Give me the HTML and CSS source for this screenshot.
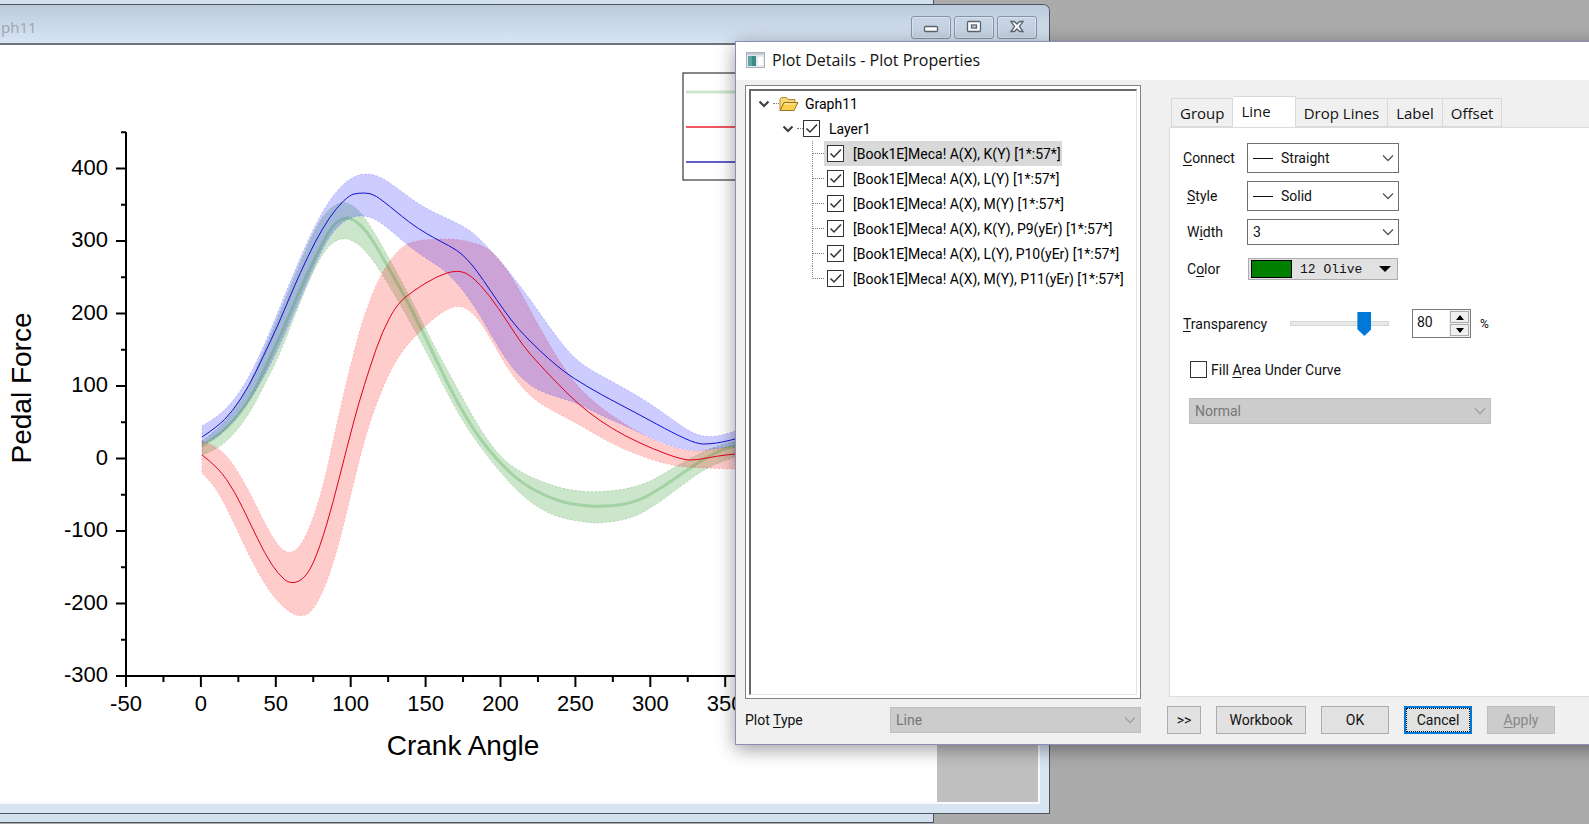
FILE: index.html
```html
<!DOCTYPE html>
<html lang="en">
<head>
    <meta charset="UTF-8">
    <meta name="viewport" content="width=device-width, initial-scale=1.0">
    <title>Plot Details</title>
    <link rel="stylesheet" href="styles.css">
</head>
<body>
    <svg class="symbols" aria-hidden="true">
        <symbol id="chevron" viewBox="0 0 12 8"><path d="M1 1.5 6 6.5 11 1.5" fill="none" stroke="currentColor" stroke-width="1.3"/></symbol>
        <symbol id="toggle" viewBox="0 0 12 8"><path d="M1.5 1.5 6 6 10.5 1.5" fill="none" stroke="currentColor" stroke-width="2.2"/></symbol>
    </svg>

    <div class="back-window"></div>

    <section class="graph-window">
        <header class="graph-title">
            <span>ph11</span>
            <div class="window-buttons">
                <button type="button" aria-label="Minimize"><svg width="16" height="14" viewBox="0 0 16 14"><rect x="1.5" y="6.5" width="13" height="5" rx="1" fill="#fff" stroke="#5c6370" stroke-width="1.3"/></svg></button>
                <button type="button" aria-label="Restore"><svg width="16" height="14" viewBox="0 0 16 14"><rect x="1.5" y="1.5" width="13" height="10" rx="1" fill="#fff" stroke="#5c6370" stroke-width="1.3"/><rect x="5.5" y="5" width="5" height="3" fill="#c8d4e2" stroke="#5c6370" stroke-width="1.3"/></svg></button>
                <button type="button" aria-label="Close"><svg width="16" height="14" viewBox="0 0 16 14"><path d="M2 1.5h3.4L8 4l2.6-2.5H14L10.4 6.5l3.6 5h-3.4L8 9l-2.6 2.5H2l3.6-5z" fill="#fff" stroke="#5c6370" stroke-width="1.3"/></svg></button>
            </div>
        </header>
        <div class="graph-client">
            <div class="graph-page">
                <svg id="chart" width="937" height="757" viewBox="0 45 937 757" role="img" aria-label="Pedal force against crank angle"></svg>
            </div>
        </div>
    </section>

    <section class="dialog" role="dialog" aria-labelledby="dialog-title">
        <header class="dialog-title">
            <svg width="20" height="18" viewBox="0 0 20 18"><rect x=".5" y="1.5" width="18" height="15" fill="#e4eaf0" stroke="#a9b1ba"/><rect x="1" y="2" width="17" height="2" fill="#c3ccd6"/><rect x="2" y="5" width="8" height="10" fill="#3f8a88"/><path d="M2 5h4v10H2z" fill="#5ba59c"/><rect x="12" y="6" width="5" height="8" fill="#fff"/></svg>
            <h1 id="dialog-title">Plot Details - Plot Properties</h1>
        </header>

        <div class="dialog-body">
            <div class="tree-frame">
                <ul class="tree">
                    <li class="node node-root">
                        <svg class="toggle"><use href="#toggle"/></svg>
                        <span class="dots"></span>
                        <svg width="20" height="16" viewBox="0 0 20 16"><path d="M1 14.5V3l1.5-1.5h5L9 3.5h7V6" fill="#f6d777" stroke="#b58a2c"/><path d="M1 14.5 5 6.5h14l-4 8z" fill="#f9cf4e" stroke="#9b7420"/><path d="M5.5 8h11" stroke="#fff0b5"/></svg>
                        <span class="node-text">Graph11</span>
                    </li>
                    <li class="node node-layer">
                        <svg class="toggle"><use href="#toggle"/></svg>
                        <span class="dots"></span>
                        <input type="checkbox" id="layer1" checked>
                        <label class="node-text" for="layer1">Layer1</label>
                    </li>
                    <li>
                        <ul class="plots">
                            <li class="node selected"><span class="dots"></span><span class="plot"><input type="checkbox" id="p1" checked><label class="node-text" for="p1">[Book1E]Meca! A(X), K(Y) [1*:57*]</label></span></li>
                            <li class="node"><span class="dots"></span><span class="plot"><input type="checkbox" id="p2" checked><label class="node-text" for="p2">[Book1E]Meca! A(X), L(Y) [1*:57*]</label></span></li>
                            <li class="node"><span class="dots"></span><span class="plot"><input type="checkbox" id="p3" checked><label class="node-text" for="p3">[Book1E]Meca! A(X), M(Y) [1*:57*]</label></span></li>
                            <li class="node"><span class="dots"></span><span class="plot"><input type="checkbox" id="p4" checked><label class="node-text" for="p4">[Book1E]Meca! A(X), K(Y), P9(yEr) [1*:57*]</label></span></li>
                            <li class="node"><span class="dots"></span><span class="plot"><input type="checkbox" id="p5" checked><label class="node-text" for="p5">[Book1E]Meca! A(X), L(Y), P10(yEr) [1*:57*]</label></span></li>
                            <li class="node"><span class="dots"></span><span class="plot"><input type="checkbox" id="p6" checked><label class="node-text" for="p6">[Book1E]Meca! A(X), M(Y), P11(yEr) [1*:57*]</label></span></li>
                        </ul>
                    </li>
                </ul>
            </div>

            <div class="tabs">
                <nav class="tab-bar">
                    <button type="button">Group</button>
                    <button type="button" class="active">Line</button>
                    <button type="button">Drop Lines</button>
                    <button type="button">Label</button>
                    <button type="button">Offset</button>
                </nav>
                <form class="tab-page">
                    <div class="fields">
                        <label for="connect"><u>C</u>onnect</label>
                        <div class="combo combo-tall with-line">
                            <select id="connect"><option>Straight</option></select>
                            <span class="line-sample"></span>
                            <svg class="arrow"><use href="#chevron"/></svg>
                        </div>
                        <label for="style" class="inset"><u>S</u>tyle</label>
                        <div class="combo combo-tall with-line">
                            <select id="style"><option>Solid</option></select>
                            <span class="line-sample"></span>
                            <svg class="arrow"><use href="#chevron"/></svg>
                        </div>
                        <label for="width" class="inset">W<u>i</u>dth</label>
                        <div class="combo">
                            <select id="width"><option>3</option></select>
                            <svg class="arrow"><use href="#chevron"/></svg>
                        </div>
                        <label for="color" class="inset">C<u>o</u>lor</label>
                        <div class="combo color-combo">
                            <select id="color"><option>12 Olive</option></select>
                            <span class="swatch"></span>
                            <svg class="arrow" viewBox="0 0 12 8"><path d="M0 1h12L6 7z"/></svg>
                        </div>
                    </div>

                    <div class="transparency">
                        <label for="transparency"><u>T</u>ransparency</label>
                        <input type="range" id="transparency" min="0" max="100" value="80">
                        <div class="spinner">
                            <input type="text" id="percent" value="80" aria-label="Transparency percent">
                            <div class="spin-buttons">
                                <button type="button" aria-label="Up"><svg width="8" height="5" viewBox="0 0 8 5"><path d="M0 5h8L4 0z"/></svg></button>
                                <button type="button" aria-label="Down"><svg width="8" height="5" viewBox="0 0 8 5"><path d="M0 0h8L4 5z"/></svg></button>
                            </div>
                        </div>
                        <span class="unit">%</span>
                    </div>

                    <div class="fill-area">
                        <input type="checkbox" id="fill">
                        <label for="fill">Fill <u>A</u>rea Under Curve</label>
                    </div>

                    <div class="combo combo-disabled fill-mode">
                        <select aria-label="Fill mode" disabled><option>Normal</option></select>
                        <svg class="arrow"><use href="#chevron"/></svg>
                    </div>
                </form>
            </div>

            <div class="plot-type">
                <label for="plot-type">Plot <u>T</u>ype</label>
                <div class="combo combo-disabled">
                    <select id="plot-type" disabled><option>Line</option></select>
                    <svg class="arrow"><use href="#chevron"/></svg>
                </div>
            </div>

            <div class="actions">
                <button type="button" class="more">&gt;&gt;</button>
                <button type="button" class="wide">Workbook</button>
                <button type="button">OK</button>
                <button type="button" class="focused">Cancel</button>
                <button type="button" disabled><u>A</u>pply</button>
            </div>
        </div>
    </section>

    <script src="chart.js"></script>
</body>
</html>
```
FILE: styles.css
```css
* {
    box-sizing: border-box;
}
body {
    margin: 0;
    height: 100vh;
    overflow: hidden;
    background-color: #ababab;
    color: #111;
    font-family: Roboto, "Liberation Sans", sans-serif;
    font-size: 14px;
}
ul {
    list-style: none;
    margin: 0;
    padding: 0;
}
button,
input,
select {
    margin: 0;
    font: inherit;
    color: inherit;
}
u {
    text-underline-offset: 2px;
}
.symbols {
    position: absolute;
    width: 0;
    height: 0;
}

/* graph windows */
.back-window {
    position: absolute;
    top: -10px;
    bottom: 1px;
    left: 0;
    width: 934px;
    background-color: #d3e0ed;
    border: 1px solid #4d545e;
    border-left: 0;
}
.graph-window {
    position: absolute;
    top: 4px;
    bottom: 10px;
    left: 0;
    width: 1050px;
    display: flex;
    flex-direction: column;
    padding-right: 9px;
    padding-bottom: 9px;
    background-color: #d7e4f2;
    border: 1px solid #4d545e;
    border-left: 0;
    border-radius: 0 7px 0 0;
}
.graph-title {
    display: flex;
    align-items: center;
    justify-content: space-between;
    height: 38px;
    margin-right: -9px;
    padding: 6px 12px 0 1px;
    flex: none;
    background: linear-gradient(#bccbdb, #d7e4f3);
    border-radius: 0 6px 0 0;
    color: #9da5ae;
    font-family: "Open Sans", sans-serif;
    font-size: 15px;
}
.window-buttons {
    display: flex;
    gap: 3px;
}
.window-buttons button {
    display: flex;
    align-items: center;
    justify-content: center;
    width: 40px;
    height: 23px;
    padding: 0;
    background-color: #c6d4e4;
    border: 1px solid #8793a5;
    border-radius: 3px;
    box-shadow: inset 0 0 0 1px #d9e4f0;
}
.graph-client {
    flex: 1;
    min-height: 0;
    background-color: #c0c0c0;
    border: 2px solid #f8fafc;
    border-top: 2px solid #6b747c;
    border-left: 0;
    overflow: hidden;
}
.graph-page {
    width: 937px;
    height: 100%;
    background-color: #fff;
    overflow: hidden;
}
.graph-page svg {
    display: block;
}
.chart-text {
    font-family: "Liberation Sans", Arial, sans-serif;
    font-size: 22px;
    fill: #000;
}
.chart-title {
    font-size: 28px;
}

/* dialog */
.dialog {
    position: absolute;
    top: 41px;
    bottom: 79px;
    left: 735px;
    right: -40px;
    display: flex;
    flex-direction: column;
    background-color: #f0f0f0;
    border: 1px solid #8d8db8;
    box-shadow: 0 4px 18px rgba(0, 0, 0, 0.4);
}
.dialog-title {
    display: flex;
    align-items: center;
    gap: 6px;
    height: 38px;
    flex: none;
    padding: 0 0 2px 10px;
    background-color: #fff;
}
.dialog-title h1 {
    margin: 0;
    font-family: "Open Sans", sans-serif;
    font-size: 16px;
    font-weight: normal;
}
.dialog-body {
    flex: 1;
    display: grid;
    grid-template-columns: 396px 1fr;
    grid-template-rows: 1fr 28px;
    column-gap: 26px;
    row-gap: 7px;
    padding: 5px 0 10px 9px;
}
.tree-frame {
    padding: 3px;
    background-color: #fff;
    border: 1px solid #828282;
}
.tree {
    height: 100%;
    border: 1px solid #e3e3e3;
    border-top: 2px solid #696969;
    border-left: 2px solid #696969;
}
.node {
    display: flex;
    align-items: center;
    height: 25px;
}
.node-root {
    padding-left: 7px;
}
.node-layer {
    padding-left: 31px;
}
.toggle {
    width: 12px;
    height: 8px;
    color: #404040;
}
.dots {
    width: 6px;
    margin-left: 3px;
    border-top: 1px dotted #808080;
}
.node-root .node-text {
    margin-left: 6px;
}
.node-text {
    margin-left: 9px;
    white-space: nowrap;
    color: #000;
}
.node input,
.fill-area input {
    appearance: none;
    flex: none;
    width: 17px;
    height: 17px;
    border: 1px solid #333;
    background-color: #fff;
}
.node input:checked {
    background-image: url("data:image/svg+xml,%3Csvg xmlns='http://www.w3.org/2000/svg' viewBox='0 0 15 15'%3E%3Cpath d='M2.5 7.5 6 11l7-7.5' fill='none' stroke='%23333' stroke-width='1.5'/%3E%3C/svg%3E");
}
.plots {
    margin-left: 61px;
}
.plots .node {
    background: repeating-linear-gradient(#909090 0 1px, transparent 1px 2px) no-repeat 0 0 / 1px 100%;
}
.plots .node:last-child {
    background-size: 1px 50%;
}
.plots .dots {
    width: 11px;
    margin-left: 1px;
}
.plot {
    display: flex;
    align-items: center;
    height: 25px;
    padding: 0 1px 0 3px;
}
.selected .plot {
    background-color: #d9d9d9;
}

/* tabs */
.tabs {
    display: flex;
    flex-direction: column;
    margin: 6px 0 2px 2px;
}
.tab-bar {
    display: flex;
    align-items: flex-end;
    height: 36px;
    padding-left: 2px;
}
.tab-bar button {
    height: 29px;
    padding: 0 8px;
    background-color: #f0f0f0;
    border: 1px solid #d9d9d9;
    border-left-width: 0;
    font-family: "Open Sans", sans-serif;
    font-size: 15px;
}
.tab-bar button:first-child {
    border-left-width: 1px;
}
.tab-bar .active {
    height: 32px;
    margin-bottom: -1px;
    padding: 0 24px 4px 8px;
    background-color: #fff;
    border-bottom: 0;
}
.tab-page {
    flex: 1;
    padding: 15px 14px 0 13px;
    background-color: #fff;
    border: 1px solid #dcdcdc;
}
.fields {
    display: grid;
    grid-template-columns: 64px 152px;
    row-gap: 8px;
    align-items: center;
}
.inset {
    padding-left: 4px;
}
.combo {
    display: grid;
    align-items: center;
}
.combo > * {
    grid-area: 1 / 1;
}
.combo select {
    appearance: none;
    width: 100%;
    height: 26px;
    padding: 0 24px 0 5px;
    background-color: #fff;
    border: 1px solid #6f6f6f;
    border-radius: 0;
    opacity: 1;
}
.combo-tall select {
    height: 30px;
}
.with-line select {
    padding-left: 33px;
}
.line-sample {
    width: 20px;
    height: 1px;
    margin-left: 6px;
    background-color: #111;
}
.arrow {
    justify-self: end;
    width: 12px;
    height: 8px;
    margin-right: 5px;
    color: #555;
    pointer-events: none;
}
.color-combo {
    margin: 5px 1px;
}
.color-combo select {
    height: 22px;
    padding-left: 51px;
    background-color: #e1e1e1;
    border-color: #adadad;
    font-family: "Liberation Mono", monospace;
    font-size: 13px;
}
.color-combo .arrow {
    margin-right: 7px;
}
.swatch {
    width: 41px;
    height: 18px;
    margin-left: 3px;
    background-color: #008000;
    border: 1px solid #000;
}
.transparency {
    display: flex;
    align-items: center;
    margin-top: 24px;
}
.transparency label {
    width: 107px;
}
.transparency input[type="range"] {
    appearance: none;
    width: 99px;
    height: 25px;
    margin-right: 23px;
    background: none;
}
.transparency input::-webkit-slider-runnable-track {
    height: 5px;
    background-color: #e7eaea;
    border: 1px solid #d6d6d6;
}
.transparency input::-webkit-slider-thumb {
    appearance: none;
    width: 14px;
    height: 24px;
    margin-top: -10px;
    background-color: #0078d7;
    clip-path: polygon(0 0, 100% 0, 100% 72%, 50% 100%, 0 72%);
}
.spinner {
    display: flex;
    width: 59px;
    height: 29px;
    border: 1px solid #7a7a7a;
}
.spinner input {
    width: 36px;
    padding: 0 0 4px 4px;
    border: 0;
}
.spin-buttons {
    flex: 1;
    display: grid;
    gap: 1px;
    padding: 1px;
    background-color: #f0f0f0;
}
.spin-buttons button {
    display: flex;
    align-items: center;
    justify-content: center;
    padding: 0;
    background-color: #f0f0f0;
    border: 1px solid #acacac;
}
.unit {
    margin-left: 9px;
    font-size: 12px;
}
.fill-area {
    display: flex;
    align-items: center;
    gap: 4px;
    margin: 23px 0 20px 7px;
}
.fill-mode {
    width: 302px;
    margin-left: 6px;
}
.combo-disabled select {
    background-color: #cccccc;
    border-color: #bfbfbf;
    color: #777;
}
.combo-disabled .arrow {
    color: #a0a0a0;
}

/* bottom row */
.plot-type {
    display: grid;
    grid-template-columns: 145px 1fr;
    align-items: center;
}
.actions {
    display: flex;
    gap: 15px;
}
.actions button {
    width: 68px;
    padding: 0;
    background-color: #e1e1e1;
    border: 1px solid #adadad;
}
.actions .more {
    width: 34px;
}
.actions .wide {
    width: 90px;
}
.actions .focused {
    border: 2px solid #0078d7;
    outline: 1px dotted #111;
    outline-offset: -3px;
}
.actions button:disabled {
    background-color: #cccccc;
    border-color: #bfbfbf;
    color: #888;
}
```
FILE: chart.js
```js
const svg = document.getElementById('chart');

const series = [
    {
        color: '#008000',
        lineColor: 'rgba(0, 128, 0, 0.2)',
        width: 3,
        upper: [202,441, 220,428, 243,398, 260,360, 277,320, 293,280, 310,240, 323,215, 337,203, 347,202, 360,211, 373,230, 390,260, 410,297, 430,338, 457,388, 480,429, 500,457, 520,472, 547,484, 573,491, 600,492, 627,489, 650,482, 673,468, 693,457, 713,447, 735,441],
        line: [202,446, 223,433, 247,405, 263,373, 283,330, 303,283, 320,248, 332,226, 343,218, 352,218, 367,231, 383,258, 403,293, 422,330, 440,368, 457,402, 477,435, 497,460, 520,482, 547,497, 573,505, 607,507, 637,502, 663,487, 687,470, 707,457, 723,449, 735,446],
        lower: [202,455, 210,452, 227,442, 247,418, 263,388, 280,354, 293,320, 313,271, 327,247, 340,238, 353,240, 367,252, 383,275, 407,316, 427,353, 443,385, 460,417, 480,447, 500,472, 520,494, 540,509, 560,518, 590,523, 603,523, 630,519, 653,507, 680,487, 700,472, 720,462, 735,457]
    },
    {
        color: '#ff0000',
        lineColor: '#e0001a',
        width: 1,
        upper: [202,441, 217,446, 233,463, 250,493, 263,520, 277,545, 288,554, 300,548, 313,520, 325,479, 337,423, 350,367, 363,318, 380,275, 397,251, 410,242, 430,239, 453,239, 467,241, 487,247, 503,263, 520,291, 537,323, 557,358, 577,386, 597,405, 620,421, 646,437, 673,448, 697,452, 717,448, 735,447],
        line: [202,455, 218,467, 235,492, 250,523, 265,554, 278,574, 291,585, 307,577, 320,547, 333,503, 347,447, 359,402, 370,367, 382,332, 397,304, 413,291, 437,276, 457,270, 471,275, 490,296, 507,321, 523,346, 540,365, 557,383, 577,403, 600,421, 625,436, 653,449, 683,460, 697,460, 717,456, 735,454],
        lower: [202,473, 217,489, 235,525, 253,564, 273,597, 290,613, 302,617, 313,611, 327,583, 340,540, 353,485, 367,430, 383,386, 400,353, 420,331, 440,313, 457,305, 470,310, 482,324, 497,350, 513,377, 533,399, 553,411, 580,425, 610,443, 640,456, 673,466, 700,468, 735,469]
    },
    {
        color: '#0000ff',
        lineColor: '#1010d0',
        width: 1,
        upper: [202,426, 220,416, 242,390, 261,353, 278,312, 295,270, 313,229, 330,199, 347,180, 363,173, 380,176, 397,188, 417,203, 433,212, 453,221, 470,230, 485,244, 507,269, 530,299, 550,328, 570,354, 587,368, 613,382, 640,397, 665,414, 687,430, 703,437, 720,436, 735,431],
        line: [202,437, 217,427, 232,412, 249,386, 263,357, 279,323, 293,289, 308,256, 322,229, 337,207, 350,195, 358,193, 371,193, 382,200, 410,223, 427,234, 440,241, 457,250, 467,259, 477,271, 490,290, 503,309, 518,329, 540,351, 557,366, 573,378, 600,394, 640,415, 673,433, 697,444, 710,444, 723,442, 735,439],
        lower: [202,444, 217,438, 237,418, 258,388, 277,352, 295,311, 313,269, 327,240, 340,224, 353,216, 370,216, 387,227, 407,245, 427,259, 443,269, 460,286, 477,310, 493,338, 507,361, 522,379, 537,390, 557,397, 577,403, 600,415, 630,428, 657,441, 680,449, 700,451, 720,448, 735,446]
    }
];

function add(tag, attrs, text) {
    const el = document.createElementNS('http://www.w3.org/2000/svg', tag);
    for (const name in attrs) {
        el.setAttribute(name, attrs[name]);
    }
    if (text !== undefined) {
        el.textContent = text;
    }
    svg.appendChild(el);
}

function toPoints(flat) {
    const points = [];
    for (let i = 0; i < flat.length; i += 2) {
        points.push([flat[i], flat[i + 1]]);
    }
    return points;
}

// quadratic curve through the midpoints
function curve(p) {
    let d = '';
    for (let i = 1; i < p.length - 1; i++) {
        const mx = (p[i][0] + p[i + 1][0]) / 2;
        const my = (p[i][1] + p[i + 1][1]) / 2;
        d += `Q${p[i]} ${mx} ${my}`;
    }
    return d + `L${p[p.length - 1]}`;
}

// bands first, lines on top
series.forEach(s => {
    const upper = toPoints(s.upper);
    const lower = toPoints(s.lower).reverse();
    add('path', {
        d: `M${upper[0]}${curve(upper)}L${lower[0]}${curve(lower)}Z`,
        fill: s.color,
        'fill-opacity': 0.2,
        stroke: s.color,
        'stroke-opacity': 0.2,
        'stroke-dasharray': '2 2'
    });
});
series.forEach(s => {
    const line = toPoints(s.line);
    add('path', { d: `M${line[0]}${curve(line)}`, fill: 'none', stroke: s.lineColor, 'stroke-width': s.width });
});

// axes
const x0 = 126, y0 = 676;
const axis = { fill: 'none', stroke: '#000', 'stroke-width': 2 };
add('path', { d: `M${x0} 132V${y0}H800`, ...axis });
for (let i = 0; i <= 15; i++) {
    const y = y0 - i * 36.25;
    const major = i % 2 === 0;
    add('path', { d: `M${x0} ${y}h${major ? -10 : -5}`, ...axis });
    if (major) {
        add('text', { x: 108, y: y + 6, 'text-anchor': 'end', class: 'chart-text' }, -300 + i * 50);
    }
}
for (let i = 0; i <= 16; i++) {
    const x = x0 + i * 37.45;
    const major = i % 2 === 0;
    add('path', { d: `M${x} ${y0}v${major ? 11 : 6}`, ...axis });
    if (major) {
        add('text', { x: x, y: 711, 'text-anchor': 'middle', class: 'chart-text' }, -50 + i * 25);
    }
}
add('text', { x: 463, y: 755, 'text-anchor': 'middle', class: 'chart-text chart-title' }, 'Crank Angle');
add('text', { transform: 'translate(31 388) rotate(-90)', 'text-anchor': 'middle', class: 'chart-text chart-title' }, 'Pedal Force');

// legend
add('rect', { x: 683, y: 73, width: 200, height: 107, fill: 'none', stroke: '#111' });
add('path', { d: 'M686 92h100', stroke: '#cce6cc', 'stroke-width': 3 });
add('path', { d: 'M686 127h100', stroke: '#e8202c', 'stroke-width': 1.5 });
add('path', { d: 'M686 162h100', stroke: '#2a2ab8', 'stroke-width': 1.5 });
```
